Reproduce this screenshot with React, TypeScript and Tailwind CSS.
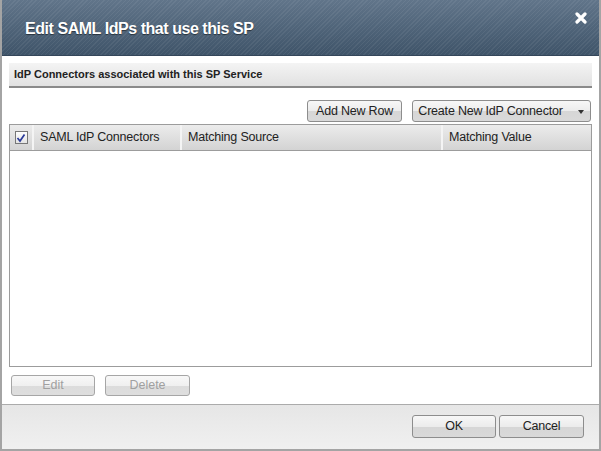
const btn =
  "flex items-center justify-center rounded-[3px] border border-[#8d8d8d] bg-[linear-gradient(to_bottom,#f7f7f7_0%,#ececec_50%,#d6d6d6_51%,#d9d9d9_100%)] text-[12.5px] tracking-[-0.2px] text-[#222]"

const dis =
  "flex items-center justify-center rounded-[3px] border border-[#a6a6a6] bg-[linear-gradient(to_bottom,#f8f8f8_0%,#f0f0f0_50%,#dcdcdc_51%,#dedede_100%)] text-[12.5px] text-[#a0a0a0]"

export default function App() {
  return (
    <div className="w-[601px] h-[451px] flex flex-col border-x-[2px] border-b-[2px] border-[#a4a4a4] bg-white font-['Liberation_Sans',Arial,sans-serif] overflow-hidden">
      {/* title bar */}
      <div className="h-[56px] shrink-0 flex items-center justify-between pl-[23px] pr-[10px] border-b border-[#34465a] bg-[repeating-linear-gradient(135deg,rgba(255,255,255,0.06)_0px,rgba(255,255,255,0.06)_1px,transparent_1px,transparent_3px),linear-gradient(to_bottom,#61758a,#3f5469)]">
        <h1 className="text-white font-bold text-[16px] tracking-[-0.45px] mt-[2px] [text-shadow:0_1px_1px_rgba(0,0,0,0.5)]">
          Edit SAML IdPs that use this SP
        </h1>
        <svg width="12" height="12" viewBox="0 0 12 12" className="mb-[19px] mr-[2px]">
          <path d="M2 2 L10 10 M10 2 L2 10" stroke="white" strokeWidth="3.2" strokeLinecap="round" />
        </svg>
      </div>

      {/* body */}
      <div className="flex-1 flex flex-col px-[7px] pt-[7px]">
        <div className="h-[25px] shrink-0 flex items-center pl-[5px] border-b-2 border-[#8a8a8a] bg-[linear-gradient(to_bottom,#f4f4f4,#e1e1e1)]">
          <span className="text-[11px] font-bold text-[#222]">IdP Connectors associated with this SP Service</span>
        </div>

        <div className="mt-[12px] flex justify-end gap-[10px] pr-[1px]">
          <button className={`${btn} w-[95px] h-[22px]`}>Add New Row</button>
          <button className={`${btn} w-[179px] h-[22px] relative pr-[22px]`}>
            Create New IdP Connector
            <svg width="6" height="4" viewBox="0 0 6 4" className="absolute right-[6px] top-[9px]">
              <path d="M0 0 L6 0 L3 4 Z" fill="#333" />
            </svg>
          </button>
        </div>

        <div className="mt-[2px] h-[243px] flex flex-col border border-[#9c9c9c]">
          <div className="h-[26px] shrink-0 flex border-b border-[#9c9c9c] bg-[linear-gradient(to_bottom,#ececec,#d3d3d3)] text-[12.5px] tracking-[-0.2px] text-[#222]">
            <div className="w-[24px] flex items-center justify-center border-r-2 border-[#f4f4f4]">
              <div className="w-[13px] h-[13px] border border-[#777] bg-[linear-gradient(to_bottom,#fdfdfd,#e4e4e4)] flex items-center justify-center">
                <svg width="10" height="10" viewBox="0 0 10 10">
                  <path d="M1.5 5 L4 8 L8.5 1.5" stroke="#2a3a9a" strokeWidth="1.7" fill="none" />
                </svg>
              </div>
            </div>
            <div className="w-[148px] flex items-center pl-[6px] border-r-2 border-[#f4f4f4]">SAML IdP Connectors</div>
            <div className="w-[261px] flex items-center pl-[6px] border-r-2 border-[#f4f4f4]">Matching Source</div>
            <div className="flex-1 flex items-center pl-[6px]">Matching Value</div>
          </div>
          <div className="flex-1 bg-white" />
        </div>

        <div className="mt-[8px] flex gap-[10px] pl-[2px]">
          <button className={`${dis} w-[84px] h-[21px]`}>Edit</button>
          <button className={`${dis} w-[85px] h-[21px]`}>Delete</button>
        </div>
      </div>

      {/* footer */}
      <div className="h-[45px] shrink-0 flex items-start justify-end gap-[3px] pt-[10px] pr-[15px] border-t border-[#ababab] bg-[linear-gradient(to_bottom,#e6e6e6,#f0f0f0)]">
        <button className={`${btn} w-[84px] h-[23px]`}>OK</button>
        <button className={`${btn} w-[85px] h-[23px]`}>Cancel</button>
      </div>
    </div>
  )
}
